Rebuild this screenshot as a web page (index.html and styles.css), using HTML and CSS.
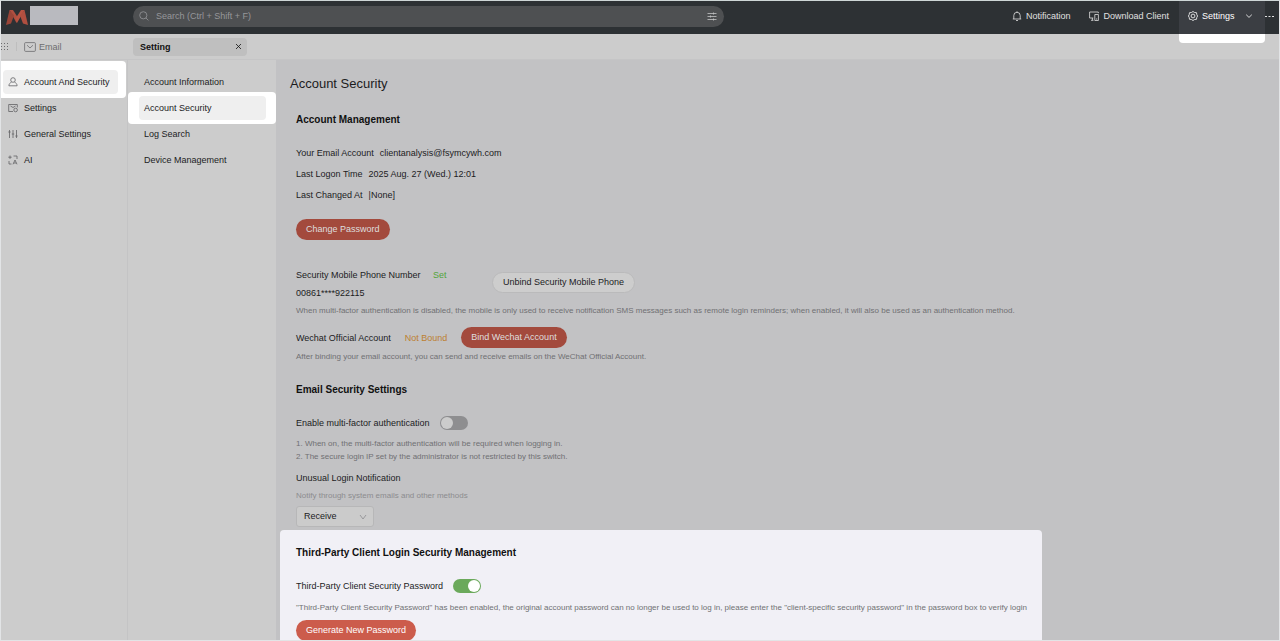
FILE: index.html
```html
<!DOCTYPE html>
<html lang="en">
<head>
    <meta charset="UTF-8">
    <title>Account Security</title>
    <link rel="stylesheet" href="styles.css">
</head>
<body>
<div class="app">
    <!-- top bar -->
    <header class="topbar">
        <div class="brand">
            <svg class="logo" viewBox="0 0 22 15" width="22" height="15">
                <path d="M3.500 0H7l5.500 8.500L10.500 13z" fill="#b04f40"/>
                <path d="M18.500 0H15L9.500 8.500l1.500 4.500z" fill="#b85342"/>
                <path d="M3.500 0L8 5.500 5 13.500 0 15z" fill="#9a4538"/>
                <path d="M18.500 0L14 5.500l3 8 5 1.500z" fill="#b04f40"/>
            </svg>
            <span class="brand-name"></span>
        </div>
        <div class="search">
            <svg class="icon" viewBox="0 0 10 10" width="10" height="10"><circle cx="4.300" cy="4.300" r="3.600"/><path d="M7 7l2.400 2.400"/></svg>
            <input type="text" class="search-input" aria-label="Search" placeholder="Search (Ctrl + Shift + F)">
            <button type="button" class="icon-btn filter" aria-label="Filter">
                <svg class="icon" viewBox="0 0 10 10" width="10" height="10"><path d="M.5 2.500h9M.5 5.500h9M.5 8.500h9M6.500 1.500v2M3.500 4.500v2M6.500 7.500v2"/></svg>
            </button>
        </div>
        <nav class="top-links">
            <a href="#" class="top-link">
                <svg class="icon" viewBox="0 0 10 10" width="10" height="10"><path d="M.8 8h8.400M1.800 8V4.500a3.200 3.200 0 0 1 6.400 0V8M5 .3v1M4 9.500h2"/></svg>
                Notification
            </a>
            <a href="#" class="top-link">
                <svg class="icon" viewBox="0 0 10 10" width="10" height="10"><path d="M9.300 2.200V1H.6v6h3.700M2 9.300h2.500M3.400 7v2.300M5.800 3.500h3.600v6H5.800zM7 8h1.200"/></svg>
                Download Client
            </a>
            <button type="button" class="top-link settings-btn">
                <svg class="icon" viewBox="0 0 10 10" width="10" height="10"><path d="M5 .5l1.600 1 1.900.2.300 1.900L9.600 5l-.8 1.400-.3 1.900-1.900.2L5 9.500l-1.600-1-1.900-.2-.3-1.900L.4 5l.8-1.400.3-1.900 1.900-.2z"/><circle cx="5" cy="5" r="1.900"/></svg>
                <span>Settings</span>
                <svg class="icon chevron" viewBox="0 0 8 8" width="8" height="8"><path d="M1.200 2.700L4 5.400l2.800-2.700"/></svg>
            </button>
            <button type="button" class="icon-btn more" aria-label="More">
                <svg viewBox="0 0 9 3" width="9" height="3"><path d="M0 1h2v1H0zM3.500 1h2v1h-2zM7 1h2v1H7z" fill="currentColor"/></svg>
            </button>
        </nav>
    </header>

    <!-- tab bar -->
    <div class="tabbar">
        <button type="button" class="icon-btn grid-btn" aria-label="Apps">
            <svg viewBox="0 0 8 9" width="8" height="9"><path d="M0 1h1v1H0zM3 1h1v1H3zM6 1h1v1H6zM0 4h1v1H0zM3 4h1v1H3zM6 4h1v1H6zM0 7h1v1H0zM3 7h1v1H3zM6 7h1v1H6z" fill="currentColor"/></svg>
        </button>
        <a href="#" class="email-tab">
            <svg class="icon" viewBox="0 0 12 10" width="12" height="10"><rect x=".6" y=".6" width="10.800" height="8.800" rx="1"/><path d="M3 3.200L6 6l3-2.800"/></svg>
            Email
        </a>
        <div class="tab">
            <span>Setting</span>
            <button type="button" class="icon-btn" aria-label="Close tab">
                <svg class="icon" viewBox="0 0 7 7" width="7" height="7"><path d="M1 1l5 5M6 1L1 6"/></svg>
            </button>
        </div>
    </div>

    <div class="content">
        <nav class="menu">
            <div class="spotlight">
                <a href="#" class="menu-item active">
                    <svg class="icon" viewBox="0 0 10 10" width="10" height="10"><circle cx="5" cy="3" r="2.300"/><path d="M3.500 5.200C2 5.800.9 7 .9 8.800h8.200C9.100 7 8 5.800 6.500 5.200"/></svg>
                    Account And Security
                </a>
            </div>
            <a href="#" class="menu-item">
                <svg class="icon" viewBox="0 0 10 10" width="10" height="10"><path d="M5 8.500H.7v-7h8.600v3M2.500 3L5 4.500 7.500 3"/><circle cx="7.600" cy="7" r="1.800"/></svg>
                Settings
            </a>
            <a href="#" class="menu-item">
                <svg class="icon" viewBox="0 0 10 10" width="10" height="10"><path d="M1.500 1v8M5 1v8M8.500 1v8M.3 3h2.400M3.800 5h2.400M7.300 7h2.400"/></svg>
                General Settings
            </a>
            <a href="#" class="menu-item">
                <svg class="icon" viewBox="0 0 10 10" width="10" height="10"><path d="M2 .5v3.400M.3 2.200h3.400M5.500 1H9v3M1 6v3h2.500M5 9.300L7 5l2 4.300M5.800 8h2.400"/></svg>
                AI
            </a>
        </nav>

        <nav class="submenu">
            <a href="#" class="submenu-item">Account Information</a>
            <div class="sub-spotlight">
                <a href="#" class="submenu-item active">Account Security</a>
            </div>
            <a href="#" class="submenu-item">Log Search</a>
            <a href="#" class="submenu-item">Device Management</a>
        </nav>

        <main class="main">
            <h1>Account Security</h1>

            <section class="section">
                <h2>Account Management</h2>
                <dl class="info">
                    <div><dt>Your Email Account</dt><dd>clientanalysis@fsymcywh.com</dd></div>
                    <div><dt>Last Logon Time</dt><dd>2025 Aug. 27 (Wed.) 12:01</dd></div>
                    <div><dt>Last Changed At</dt><dd>|None]</dd></div>
                </dl>
                <button type="button" class="btn btn-primary">Change Password</button>

                <div class="phone">
                    <div class="phone-info">
                        <div>Security Mobile Phone Number <span class="status-set">Set</span></div>
                        <div>00861****922115</div>
                    </div>
                    <button type="button" class="btn btn-default">Unbind Security Mobile Phone</button>
                </div>
                <p class="hint">When multi-factor authentication is disabled, the mobile is only used to receive notification SMS messages such as remote login reminders; when enabled, it will also be used as an authentication method.</p>

                <div class="wechat">
                    <span>Wechat Official Account</span>
                    <span class="status-unbound">Not Bound</span>
                    <button type="button" class="btn btn-primary">Bind Wechat Account</button>
                </div>
                <p class="hint">After binding your email account, you can send and receive emails on the WeChat Official Account.</p>
            </section>

            <section class="section email-security">
                <h2>Email Security Settings</h2>
                <div class="switch-row">
                    <label for="mfa">Enable multi-factor authentication</label>
                    <input type="checkbox" class="switch" id="mfa">
                </div>
                <p class="hint notes">1. When on, the multi-factor authentication will be required when logging in.<br>2. The secure login IP set by the administrator is not restricted by this switch.</p>
                <label class="select-label" for="notify">Unusual Login Notification</label>
                <p class="hint light">Notify through system emails and other methods</p>
                <div class="select-box">
                    <select id="notify">
                        <option>Receive</option>
                    </select>
                    <svg class="icon" viewBox="0 0 8 8" width="8" height="8"><path d="M1 2l3 4 3-4"/></svg>
                </div>
            </section>

            <section class="third-party">
                <h2>Third-Party Client Login Security Management</h2>
                <div class="switch-row">
                    <label for="clientPwd">Third-Party Client Security Password</label>
                    <input type="checkbox" class="switch" id="clientPwd" checked>
                </div>
                <p class="hint">"Third-Party Client Security Password" has been enabled, the original account password can no longer be used to log in, please enter the "client-specific security password" in the password box to verify login</p>
                <button type="button" class="btn btn-primary bright">Generate New Password</button>
            </section>
        </main>
    </div>
</div>
</body>
</html>
```
FILE: styles.css
```css
* {
    box-sizing: border-box;
}

body {
    margin: 0;
    color: #1c1c1e;
    font-family: "Liberation Sans", Arial, sans-serif;
    font-size: 9px;
}

h1, h2, p, dl, dd {
    margin: 0;
}

a {
    color: inherit;
    text-decoration: none;
}

button, input, select {
    font: inherit;
    color: inherit;
}

.app {
    display: flex;
    flex-direction: column;
    height: 100vh;
    border: 1px solid #e2e4e6;
    border-top-color: #ced6d6;
    overflow: hidden;
}

.icon {
    flex: none;
    fill: none;
    stroke: currentColor;
    stroke-width: 0.8;
}

.icon-btn {
    display: flex;
    padding: 0;
    border: none;
    background: none;
}

/* top bar */
.topbar {
    display: flex;
    flex: none;
    align-items: center;
    height: 33px;
    color: #e0e0e0;
    background: #2d3134;
}

.brand {
    display: flex;
    flex: none;
    gap: 2px;
    align-items: center;
    width: 132px;
    padding: 0 0 4px 5px;
}

.logo {
    margin-top: 3px;
}

.brand-name {
    width: 48px;
    height: 19px;
    background: #b9babf;
}

.search {
    display: flex;
    flex: 0 1 591px;
    gap: 7px;
    align-items: center;
    height: 21px;
    margin-bottom: 3px;
    padding: 0 7px 0 6px;
    border-radius: 11px;
    color: #96979a;
    background: #4e5052;
}

.search-input {
    flex: 1;
    min-width: 0;
    padding: 0;
    border: none;
    outline: none;
    background: none;
}

.search-input::placeholder {
    color: #96979a;
}

.filter {
    color: #c4c5c6;
}

.top-links {
    display: flex;
    align-self: stretch;
    margin-left: auto;
}

.top-link {
    display: flex;
    gap: 4px;
    align-items: center;
    padding: 0 10px 4px 9px;
}

.settings-btn {
    position: relative;
    width: 86px;
    padding-right: 12px;
    border: none;
    color: #fff;
    background: #3b3e43;
}

.settings-btn::after {
    content: "";
    position: absolute;
    top: 100%;
    left: 0;
    width: 100%;
    height: 9px;
    border-radius: 0 0 4px 4px;
    background: #fff;
}

.chevron {
    margin-left: auto;
}

.more {
    align-items: center;
    width: 14px;
    padding-bottom: 3px;
}

/* tab bar */
.tabbar {
    display: flex;
    flex: none;
    align-items: center;
    height: 26px;
    border-bottom: 1px solid #c5c5c6;
    color: #6c6c6e;
    background: #ccc;
}

.grid-btn {
    width: 16px;
    border-right: 1px solid #bebebe;
}

.email-tab {
    display: flex;
    gap: 3px;
    align-items: center;
    width: 116px;
    padding-left: 7px;
}

.tab {
    display: flex;
    align-items: center;
    justify-content: space-between;
    width: 114px;
    height: 18px;
    padding: 0 5px 0 7px;
    border-radius: 4px;
    color: #111;
    background: #bfbfbf;
    font-weight: bold;
}

/* side menus */
.content {
    display: flex;
    flex: 1;
    min-height: 0;
}

.menu {
    flex: none;
    width: 127px;
    padding-top: 1px;
    border-right: 1px solid #c4c4c5;
    background: #ccc;
}

.spotlight {
    width: 125px;
    height: 37px;
    margin-bottom: -3px;
    padding: 9px 8px 0 2px;
    border-radius: 0 4px 4px 0;
    background: #fff;
}

.menu-item {
    display: flex;
    gap: 6px;
    align-items: center;
    height: 26px;
    padding-left: 7px;
}

.menu-item .icon {
    color: #626264;
}

.spotlight .menu-item {
    height: 24px;
    padding-left: 5px;
    border-radius: 4px;
    background: #efefef;
}

.submenu {
    flex: none;
    width: 148px;
    padding-top: 9px;
    background: #ccc;
}

.submenu-item {
    display: flex;
    align-items: center;
    height: 26px;
    padding-left: 16px;
}

.sub-spotlight {
    margin: -3px 0;
    padding: 4px 10px 4px 11px;
    border-radius: 4px;
    background: #fff;
}

.sub-spotlight .submenu-item {
    height: 24px;
    padding-left: 5px;
    border-radius: 4px;
    background: #efefef;
}

/* main area */
.main {
    flex: 1;
    min-width: 0;
    padding: 12px 0 0 4px;
    overflow: hidden;
    background: #c2c2c4;
}

h1 {
    padding-left: 10px;
    font-size: 13px;
    font-weight: normal;
    line-height: 24px;
}

h2 {
    color: #111;
    font-size: 10px;
    line-height: 20px;
}

.section {
    padding: 14px 16px 0;
}

.info {
    margin: 13px 0;
    line-height: 21px;
}

.info div {
    display: flex;
    gap: 6px;
}

.btn {
    height: 21px;
    padding: 0 10px 1px;
    border: none;
    border-radius: 11px;
}

.btn-primary {
    color: #dedede;
    background: #a34a3d;
}

.btn-default {
    margin-bottom: 3px;
    border: 1px solid #bababb;
    background: #cdcdcd;
}

.bright {
    color: #fff;
    background: #cc5c4c;
}

.phone {
    display: flex;
    align-items: center;
    margin: 26px 0 2px;
    line-height: 18px;
}

.phone-info {
    width: 196px;
}

.status-set {
    margin-left: 10px;
    color: #52a43a;
}

.status-unbound {
    color: #bd7f30;
}

.hint {
    color: #707073;
    font-size: 8px;
    line-height: 14px;
}

.wechat {
    display: flex;
    gap: 14px;
    align-items: center;
    margin: 9px 0 2px;
}

.email-security {
    padding-top: 16px;
}

.switch-row {
    display: flex;
    gap: 10px;
    align-items: center;
    height: 20px;
    margin: 13px 0 4px;
}

.switch {
    appearance: none;
    width: 28px;
    height: 14px;
    margin: 0;
    padding: 1px;
    border-radius: 7px;
    background: #8e8e90;
}

.switch::before {
    content: "";
    display: block;
    width: 12px;
    height: 12px;
    border-radius: 50%;
    background: #ccc;
}

.switch:checked {
    background: #6ba95b;
}

.switch:checked::before {
    margin-left: auto;
    background: #fff;
}

.notes {
    line-height: 13px;
}

.select-label {
    display: block;
    margin: 5px 0 1px;
    line-height: 20px;
}

.light {
    color: #8c8c8f;
}

.select-box {
    display: flex;
    align-items: center;
    width: 78px;
    height: 21px;
    margin-top: 3px;
    padding-right: 6px;
    border: 1px solid #b7b7b8;
    border-radius: 3px;
    color: #8c8c8f;
    background: #cbcbcb;
}

.select-box select {
    flex: 1;
    appearance: none;
    height: 19px;
    padding: 0 0 2px 7px;
    border: none;
    color: #1c1c1e;
    background: none;
}

.third-party {
    width: 100%;
    max-width: 762px;
    min-height: 130px;
    margin-top: 3px;
    padding: 13px 8px 12px 16px;
    border-radius: 4px;
    background: #f1f0f6;
}

.third-party .hint {
    margin: 5px 0;
}
```
